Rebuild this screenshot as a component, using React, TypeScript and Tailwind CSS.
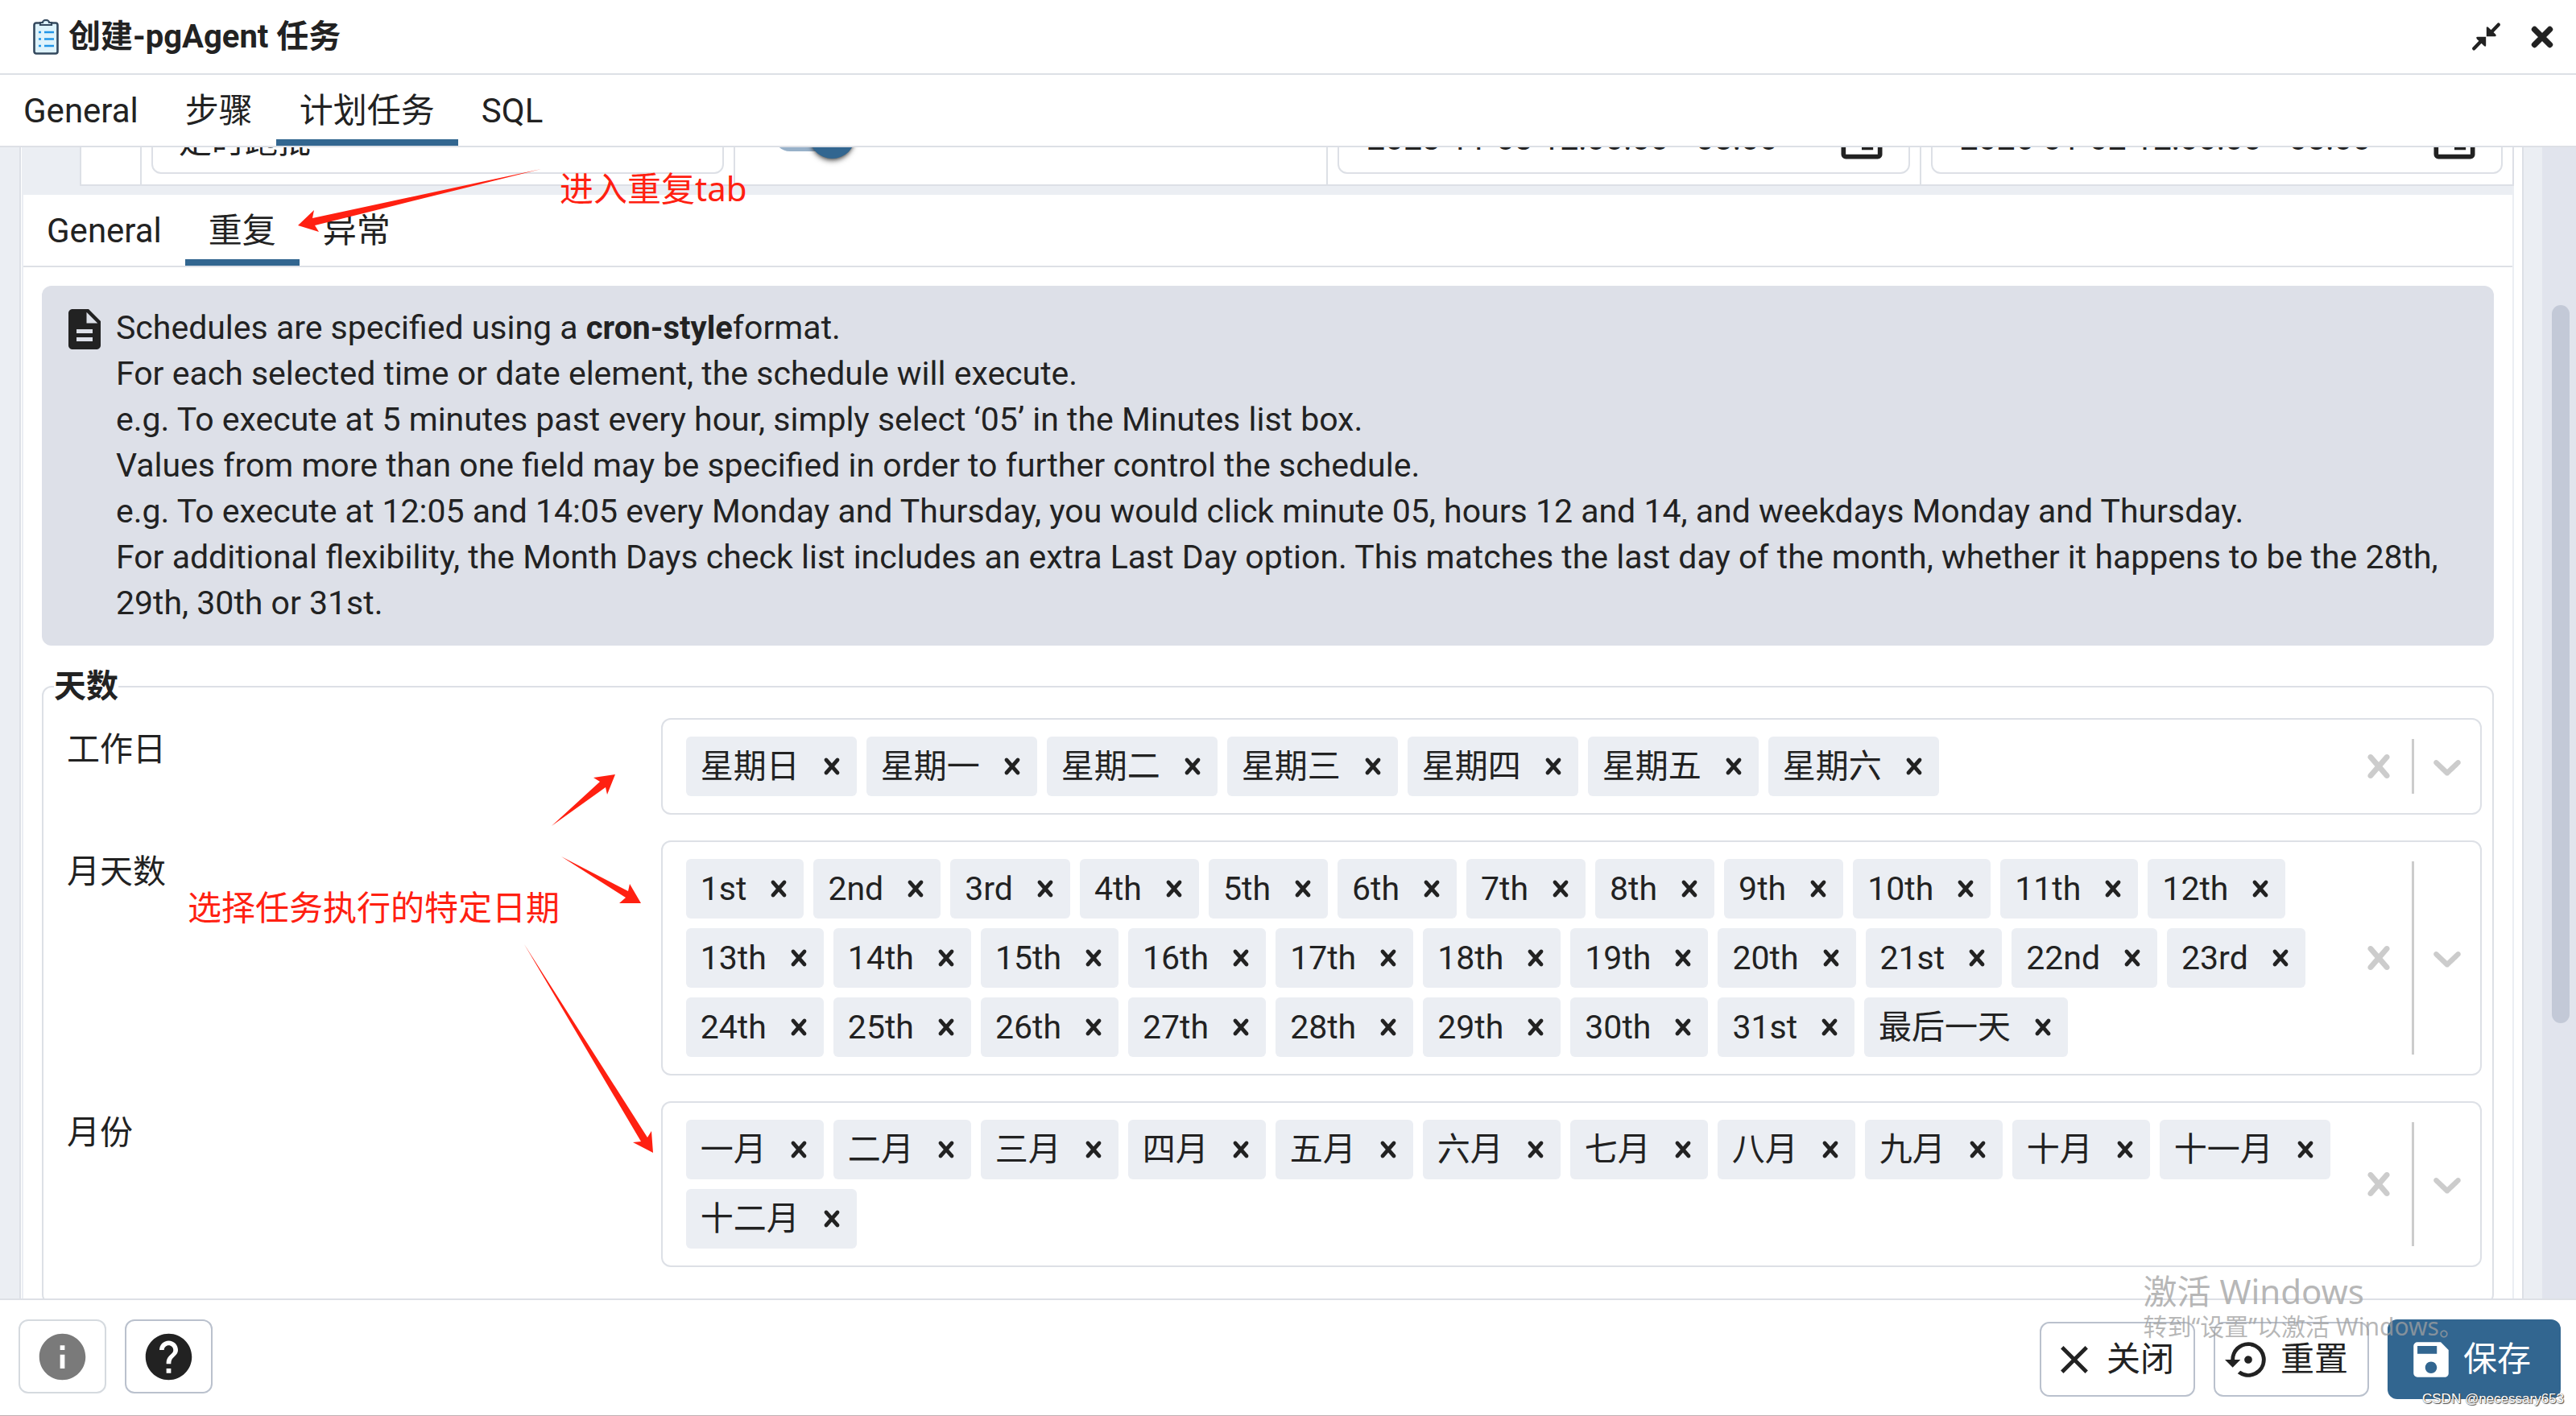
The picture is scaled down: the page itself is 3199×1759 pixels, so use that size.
import type { ReactNode } from "react";
import {
  MdClose,
  MdDescription,
  MdEvent,
  MdHelp,
  MdInfo,
  MdSave,
  MdSettingsBackupRestore,
} from "react-icons/md";

const CROSS =
  "M14.348 14.849c-0.469 0.469-1.229 0.469-1.697 0l-2.651-3.030-2.651 3.029c-0.469 0.469-1.229 0.469-1.697 0-0.469-0.469-0.469-1.229 0-1.697l2.758-3.15-2.759-3.152c-0.469-0.469-0.469-1.228 0-1.697s1.228-0.469 1.697 0l2.652 3.031 2.651-3.031c0.469-0.469 1.228-0.469 1.697 0s0.469 1.229 0 1.697l-2.758 3.152 2.758 3.15c0.469 0.469 0.469 1.229 0 1.698z";
const CHEVRON =
  "M4.516 7.548c0.436-0.446 1.043-0.481 1.576 0l3.908 3.747 3.908-3.747c0.533-0.481 1.141-0.446 1.574 0 0.436 0.445 0.408 1.197 0 1.615-0.406 0.418-4.695 4.502-4.695 4.502-0.217 0.223-0.502 0.335-0.787 0.335s-0.57-0.112-0.789-0.335c0 0-4.287-4.084-4.695-4.502s-0.436-1.17 0-1.615z";

const weekdays = ["星期日", "星期一", "星期二", "星期三", "星期四", "星期五", "星期六"];
const monthDays = [
  "1st", "2nd", "3rd", "4th", "5th", "6th", "7th", "8th", "9th", "10th", "11th",
  "12th", "13th", "14th", "15th", "16th", "17th", "18th", "19th", "20th", "21st",
  "22nd", "23rd", "24th", "25th", "26th", "27th", "28th", "29th", "30th", "31st",
  "最后一天",
];
const months = [
  "一月", "二月", "三月", "四月", "五月", "六月", "七月", "八月", "九月", "十月",
  "十一月", "十二月",
];

const Glyph = ({ d, className }: { d: string; className: string }) => (
  <svg viewBox="0 0 20 20" fill="currentColor" className={className} aria-hidden="true">
    <path d={d} />
  </svg>
);

const JobIcon = () => (
  <svg viewBox="0 0 32 44" className="h-11 w-8" aria-hidden="true">
    <rect x="1.5" y="4.5" width="29" height="38" rx="2.5" fill="#def3fc" stroke="#34495e" strokeWidth="2.6" />
    <path d="M9 7V4h3a4 3 0 0 1 8 0h3v3z" fill="#def3fc" stroke="#34495e" strokeWidth="2.2" />
    <path d="M7 16h3M7 24.5h3M7 33h3" stroke="#2196e8" strokeWidth="2.6" />
    <path d="M14 16h12M14 24.5h12M14 33h12" stroke="#2196e8" strokeWidth="2.6" />
  </svg>
);

const RestoreIcon = () => (
  <svg viewBox="0 0 106 106" className="size-[35px]" fill="currentColor" stroke="currentColor" aria-hidden="true">
    <path d="M99 8L72 36M7 98L34 70" strokeWidth="13" strokeLinecap="round" fill="none" />
    <path d="M54 20Q55 13 61 18L88 44Q93 52 86 52H54Z" stroke="none" />
    <path d="M52 86Q51 93 45 88L18 62Q13 54 20 54H52Z" stroke="none" />
  </svg>
);

const CloseIcon = () => (
  <svg viewBox="0 0 28 28" className="size-7" stroke="currentColor" aria-hidden="true">
    <path d="M4.5 4.5L23.5 23.5M23.5 4.5L4.500 23.5" strokeWidth="7.4" strokeLinecap="round" />
  </svg>
);

const Tabs = ({ items, active }: { items: string[]; active: string }) => (
  <div role="tablist" className="flex border-b-2 border-[#dde0e6] bg-white">
    {items.map((item) => (
      <button
        key={item}
        role="tab"
        aria-selected={item === active}
        className={
          item === active
            ? "h-[88px] border-b-8 border-[#326690] px-[29px] pt-2 text-[42px] leading-[57px]"
            : "h-[88px] px-[29px] text-[42px] leading-[57px]"
        }
      >
        {item}
      </button>
    ))}
  </div>
);

const Cell = ({ children }: { children: ReactNode }) => (
  <div className="flex flex-1 border-r-2 border-[#dde0e6] px-3 py-[13px]">{children}</div>
);

const DateBox = ({ label, value }: { label: string; value: string }) => (
  <div className="flex h-[88px] flex-1 items-center rounded-xl border-2 border-[#dde0e6] pr-6 pl-[34px]">
    <input aria-label={label} defaultValue={value} className="min-w-0 flex-1 outline-none" />
    <button aria-label={`${label} calendar`}>
      <MdEvent className="size-[68px]" />
    </button>
  </div>
);

const MultiSelect = ({ id, label, values }: { id: string; label: string; values: string[] }) => (
  <div className="grid grid-cols-4">
    <label htmlFor={id} className="pt-[11px] pl-4">
      {label}
    </label>
    <div className="col-span-3 flex rounded-xl border-2 border-[#dde0e6] bg-white">
      <div className="flex flex-1 flex-wrap gap-3 py-[21px] pr-3 pl-[29px]">
        {values.map((value) => (
          <div key={value} className="flex h-[74px] items-center rounded-md bg-[#ebeef3] pl-[18px]">
            <span>{value}</span>
            <button aria-label={`Remove ${value}`} className="ml-[9px] px-[11px]">
              <Glyph d={CROSS} className="size-10" />
            </button>
          </div>
        ))}
        <input id={id} role="combobox" aria-expanded="false" className="w-1 outline-none" />
      </div>
      <div className="flex items-stretch text-[#cccccc]">
        <button aria-label="Clear" className="px-3">
          <Glyph d={CROSS} className="size-[58px]" />
        </button>
        <span className="my-6 w-[3px] bg-[#cccccc]" />
        <button aria-label="Open" className="px-3">
          <Glyph d={CHEVRON} className="size-[58px]" />
        </button>
      </div>
    </div>
  </div>
);

const Annotations = () => (
  <div className="pointer-events-none absolute inset-0 font-['Noto_Sans','Noto_Sans_CJK_SC',sans-serif] text-[42px] leading-[60px] text-[#ff2011]">
    <svg className="absolute inset-0 size-full" fill="#ff2011" aria-hidden="true">
      <path d="M370 280L390 261L388 271L672 210L391 280L396 288Z" />
      <path d="M764 962L737 966L745 971L685 1026L752 978L754 987Z" />
      <path d="M796 1122L782 1098L780 1107L697 1064L777 1115L769 1122Z" />
      <path d="M811 1432L809 1405L804 1413L651 1173L796 1418L786 1419Z" />
    </svg>
    <span className="absolute top-[204px] left-[695px]">进入重复tab</span>
    <span className="absolute top-[1097px] left-[233px]">选择任务执行的特定日期</span>
  </div>
);

const Watermarks = () => (
  <div className="pointer-events-none absolute inset-0">
    <div className="absolute right-[140px] bottom-[90px] font-['Noto_Sans','Noto_Sans_CJK_SC',sans-serif] text-[#a0a0a0]/75">
      <p className="text-[42px] leading-[48px]">激活 Windows</p>
      <p className="text-[30px] leading-[40px]">转到“设置”以激活 Windows。</p>
    </div>
    <span className="absolute right-[15px] bottom-2 font-['Liberation_Sans',sans-serif] text-[17px] leading-6 text-white [text-shadow:1px_1px_1px_#444,0_0_1px_#444]">
      CSDN @necessary653
    </span>
  </div>
);

const App = () => {
  return (
    <div className="relative flex h-screen flex-col overflow-hidden border-b border-[#c0aeb2] bg-white font-['Roboto','Noto_Sans_CJK_SC',sans-serif] text-[41px] leading-[57px] text-[#222222]">
      <header className="flex h-[93px] shrink-0 items-center justify-between border-b-2 border-[#dde0e6] pr-7 pl-[41px]">
        <h1 className="flex items-center gap-3 text-[40px] font-bold">
          <JobIcon />
          创建-pgAgent 任务
        </h1>
        <div className="flex items-center gap-[38px]">
          <button aria-label="Restore">
            <RestoreIcon />
          </button>
          <button aria-label="Close dialog">
            <CloseIcon />
          </button>
        </div>
      </header>
      <Tabs items={["General", "步骤", "计划任务", "SQL"]} active="计划任务" />

      <main className="flex min-h-0 flex-1 overflow-hidden bg-[#ebeef3]">
        <div className="mr-[23px] ml-6 min-w-0 flex-1 self-start border-x-2 border-[#dde0e6] bg-white pr-[10px] pl-px">
          <div className="flex h-12 items-end overflow-hidden bg-[#ebeef3] pl-[72px]">
            <div className="flex flex-1 border-x-2 border-b-2 border-[#dde0e6] bg-white">
              <div className="w-[75px] border-r-2 border-[#dde0e6]" />
              <Cell>
                <input
                  aria-label="名称"
                  defaultValue="定时跑批"
                  className="h-[88px] min-w-0 flex-1 rounded-xl border-2 border-[#dde0e6] px-8 outline-none"
                />
              </Cell>
              <Cell>
                <input
                  type="checkbox"
                  role="switch"
                  aria-label="启用"
                  defaultChecked
                  className="relative mt-5 ml-9 h-10 w-[97px] appearance-none rounded-full bg-[#98b1c9] after:absolute after:-top-2 after:right-[-4px] after:size-[57px] after:rounded-full after:bg-[#326690] after:shadow-md after:shadow-black/50"
                />
              </Cell>
              <Cell>
                <DateBox label="开始" value="2023-11-03 12:00:00 +08:00" />
              </Cell>
              <div className="flex flex-1 px-3 py-[13px]">
                <DateBox label="结束" value="2026-01-02 12:00:00 +08:00" />
              </div>
            </div>
          </div>
          <div className="h-[11px] bg-[#ebeef3]" />

          <section className="border-x-2 border-[#ebeef3]">
            <Tabs items={["General", "重复", "异常"]} active="重复" />
            <div className="px-[23px] pt-[23px]">
              <div className="flex rounded-xl bg-[#dde0e8] px-[23px] py-6">
                <MdDescription className="mr-[9px] size-[60px] shrink-0" />
                <div>
                  <p>
                    Schedules are specified using a <b className="text-[40px]">cron-style</b>format.
                  </p>
                  <p>For each selected time or date element, the schedule will execute.</p>
                  <p>e.g. To execute at 5 minutes past every hour, simply select ‘05’ in the Minutes list box.</p>
                  <p>Values from more than one field may be specified in order to further control the schedule.</p>
                  <p>
                    e.g. To execute at 12:05 and 14:05 every Monday and Thursday, you would click minute 05,
                    hours 12 and 14, and weekdays Monday and Thursday.
                  </p>
                  <p>
                    For additional flexibility, the Month Days check list includes an extra Last Day option.
                    This matches the last day of the month, whether it happens to be the 28th, 29th, 30th or
                    31st.
                  </p>
                </div>
              </div>

              <fieldset className="mt-[22px] flex flex-col gap-8 rounded-xl border-2 border-[#dde0e6] px-[13px] pt-[11px] pb-11">
                <legend className="text-[40px] font-bold">天数</legend>
                <MultiSelect id="weekdays" label="工作日" values={weekdays} />
                <MultiSelect id="monthdays" label="月天数" values={monthDays} />
                <MultiSelect id="months" label="月份" values={months} />
              </fieldset>
            </div>
          </section>
        </div>
        <div className="w-[42px] bg-[#e1e4ed] pt-[196px] pr-2 pl-3">
          <div className="h-[892px] rounded-full bg-[#c3c9d7]" />
        </div>
      </main>

      <footer className="flex h-[145px] shrink-0 items-start justify-between border-t-2 border-[#dde0e6] bg-white pt-6 pr-[19px] pl-[23px]">
        <div className="flex gap-[23px]">
          <button aria-label="Info" className="h-[92px] rounded-xl border-2 border-[#d5dadf] px-[18px] text-[#7a7a7a]">
            <MdInfo className="size-[69px]" />
          </button>
          <button aria-label="Help" className="h-[92px] rounded-xl border-2 border-[#bac1cd] px-[18px]">
            <MdHelp className="size-[69px]" />
          </button>
        </div>
        <div className="flex items-center gap-[23px] text-[42px]">
          <button className="flex h-[93px] items-center gap-[11px] rounded-xl border-2 border-[#bac1cd] px-6">
            <MdClose className="-ml-3 size-[58px]" />
            关闭
          </button>
          <button className="flex h-[93px] items-center gap-[11px] rounded-xl border-2 border-[#bac1cd] px-6">
            <MdSettingsBackupRestore className="-ml-3 size-[58px]" />
            重置
          </button>
          <button className="flex h-[99px] items-center gap-[11px] rounded-xl bg-[#326690] px-[37px] text-white">
            <MdSave className="-ml-3 size-[58px]" />
            保存
          </button>
        </div>
      </footer>

      <Annotations />
      <Watermarks />
    </div>
  );
};

export default App;
